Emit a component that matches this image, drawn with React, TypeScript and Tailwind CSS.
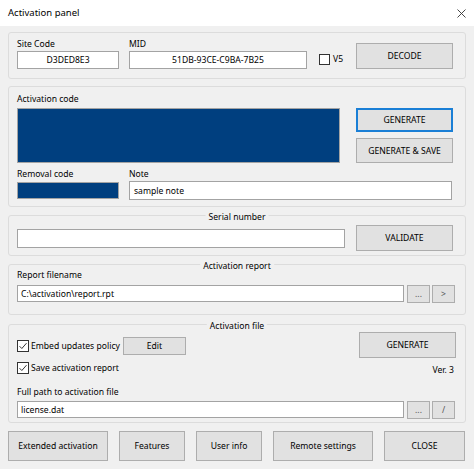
import type { ReactNode } from "react";

const base = "font-['Noto_Sans',Arial,sans-serif] text-[8.6px] leading-[12px] text-black";

function Btn({ className = "", children, focused }: { className?: string; children: ReactNode; focused?: boolean }) {
  return (
    <button
      type="button"
      className={`flex items-center justify-center whitespace-nowrap bg-[#e1e1e1] ${
        focused ? "border-2 border-[#1a7fd6]" : "border border-[#adadad]"
      } ${className}`}
    >
      {children}
    </button>
  );
}

function Field({ className = "", children }: { className?: string; children?: ReactNode }) {
  return <div className={`flex items-center whitespace-nowrap border border-[#a3a3a3] bg-white ${className}`}>{children}</div>;
}

function Check({ checked, size = "h-[12px] w-[12px]" }: { checked?: boolean; size?: string }) {
  return (
    <span className={`flex shrink-0 items-center justify-center border border-[#333] bg-white ${size}`}>
      {checked && (
        <svg viewBox="0 0 12 12" className="h-[10px] w-[10px]">
          <path d="M1.8 6.2 L4.6 9 L10.2 2.6" fill="none" stroke="#222" strokeWidth="1.1" />
        </svg>
      )}
    </span>
  );
}

function Group({ className = "", title, children }: { className?: string; title?: string; children: ReactNode }) {
  return (
    <div className={`relative rounded-[3px] border border-[#dcdcdc] ${className}`}>
      {title && (
        <span className="absolute left-1/2 top-[-5px] -translate-x-1/2 whitespace-nowrap bg-[#f0f0f0] px-[3px]">
          {title}
        </span>
      )}
      {children}
    </div>
  );
}

export default function App() {
  return (
    <div className={`h-[469px] w-[474px] overflow-hidden bg-[#f0f0f0] ${base}`}>
      <div className="flex h-[26px] items-center justify-between bg-white pl-[8px] pr-[8px]">
        <span className="text-[9.5px]">Activation panel</span>
        <svg viewBox="0 0 9 9" className="h-[9px] w-[9px]">
          <path d="M0.5 0.5 L8.5 8.5 M8.5 0.5 L0.5 8.5" stroke="#333" strokeWidth="0.9" />
        </svg>
      </div>

      <div className="px-[8px] pt-[6px]">
        {/* site code / mid */}
        <Group className="h-[47px]">
          <div className="flex h-full items-end pb-[9px] pl-[8px] pr-[12px]">
            <div className="w-[102px]">
              <div className="mb-[1px]">Site Code</div>
              <Field className="h-[18px] justify-center">D3DED8E3</Field>
            </div>
            <div className="ml-[10px] w-[178px]">
              <div className="mb-[1px]">MID</div>
              <Field className="h-[18px] justify-center">51DB-93CE-C9BA-7B25</Field>
            </div>
            <div className="mb-[4px] ml-[12px] flex items-center">
              <Check size="h-[11px] w-[11px]" />
              <span className="ml-[3px]">V5</span>
            </div>
            <Btn className="ml-auto h-[26px] w-[97px]">DECODE</Btn>
          </div>
        </Group>

        {/* activation code */}
        <Group className="mt-[7px] h-[121px]">
          <div className="pl-[8px] pr-[12px] pt-[6px]">
            <div className="flex items-end">
              <div className="w-[323px]">
                <div className="mb-[3px]">Activation code</div>
                <div className="h-[55px] border border-[#a3a3a3] bg-[#003f7f]" />
              </div>
              <div className="ml-auto flex w-[97px] flex-col gap-[6px]">
                <Btn focused className="h-[24px]">GENERATE</Btn>
                <Btn className="h-[25px]">GENERATE &amp; SAVE</Btn>
              </div>
            </div>
            <div className="mt-[5px] flex items-start">
              <div className="w-[102px]">
                <div className="mb-[2px]">Removal code</div>
                <div className="h-[17px] border border-[#a3a3a3] bg-[#003f7f]" />
              </div>
              <div className="ml-[10px] w-[323px]">
                <div className="mb-[1px]">Note</div>
                <Field className="h-[19px] pl-[4px]">sample note</Field>
              </div>
            </div>
          </div>
        </Group>

        {/* serial number */}
        <Group className="mt-[8px] h-[41px]" title="Serial number">
          <div className="flex h-full items-center pl-[8px] pr-[12px] pt-[5px]">
            <Field className="h-[19px] w-[328px]" />
            <Btn className="ml-auto h-[26px] w-[97px]">VALIDATE</Btn>
          </div>
        </Group>

        {/* activation report */}
        <Group className="mt-[8px] h-[51px]" title="Activation report">
          <div className="pl-[8px] pr-[9px] pt-[4px]">
            <div className="mb-[4px]">Report filename</div>
            <div className="flex items-start">
              <Field className="h-[17px] w-[387px] pl-[3px]">C:\activation\report.rpt</Field>
              <Btn className="ml-[3px] h-[18px] w-[23px] text-[#555]">...</Btn>
              <Btn className="ml-[2px] h-[18px] w-[23px] text-[#555]">&gt;</Btn>
            </div>
          </div>
        </Group>

        {/* activation file */}
        <Group className="mt-[9px] h-[99px]" title="Activation file">
          <div className="pl-[8px] pr-[9px] pt-[7px]">
            <div className="flex items-start">
              <div className="flex flex-col pt-[5px]">
                <div className="flex h-[18px] items-center">
                  <div className="flex w-[106px] items-center">
                    <Check checked />
                    <span className="ml-[2px] whitespace-nowrap">Embed updates policy</span>
                  </div>
                  <Btn className="h-[18px] w-[63px]">Edit</Btn>
                </div>
                <div className="mt-[7px] flex h-[12px] items-center">
                  <Check checked />
                  <span className="ml-[2px] whitespace-nowrap">Save activation report</span>
                </div>
              </div>
              <div className="ml-auto flex flex-col items-end">
                <Btn className="h-[26px] w-[97px]">GENERATE</Btn>
                <span className="mr-[2px] mt-[6px]">Ver. 3</span>
              </div>
            </div>
            <div className="mb-[3px] mt-[10px]">Full path to activation file</div>
            <div className="flex items-start">
              <Field className="h-[17px] w-[387px] pl-[3px]">license.dat</Field>
              <Btn className="ml-[3px] h-[18px] w-[23px] text-[#555]">...</Btn>
              <Btn className="ml-[2px] h-[18px] w-[23px] text-[#555]">/</Btn>
            </div>
          </div>
        </Group>

        <div className="mt-[8px] flex gap-[11px]">
          <Btn className="h-[30px] w-[100px]">Extended activation</Btn>
          <Btn className="h-[30px] w-[66px]">Features</Btn>
          <Btn className="h-[30px] w-[66px]">User info</Btn>
          <Btn className="h-[30px] w-[100px]">Remote settings</Btn>
          <Btn className="h-[30px] w-[81px]">CLOSE</Btn>
        </div>
      </div>
    </div>
  );
}
